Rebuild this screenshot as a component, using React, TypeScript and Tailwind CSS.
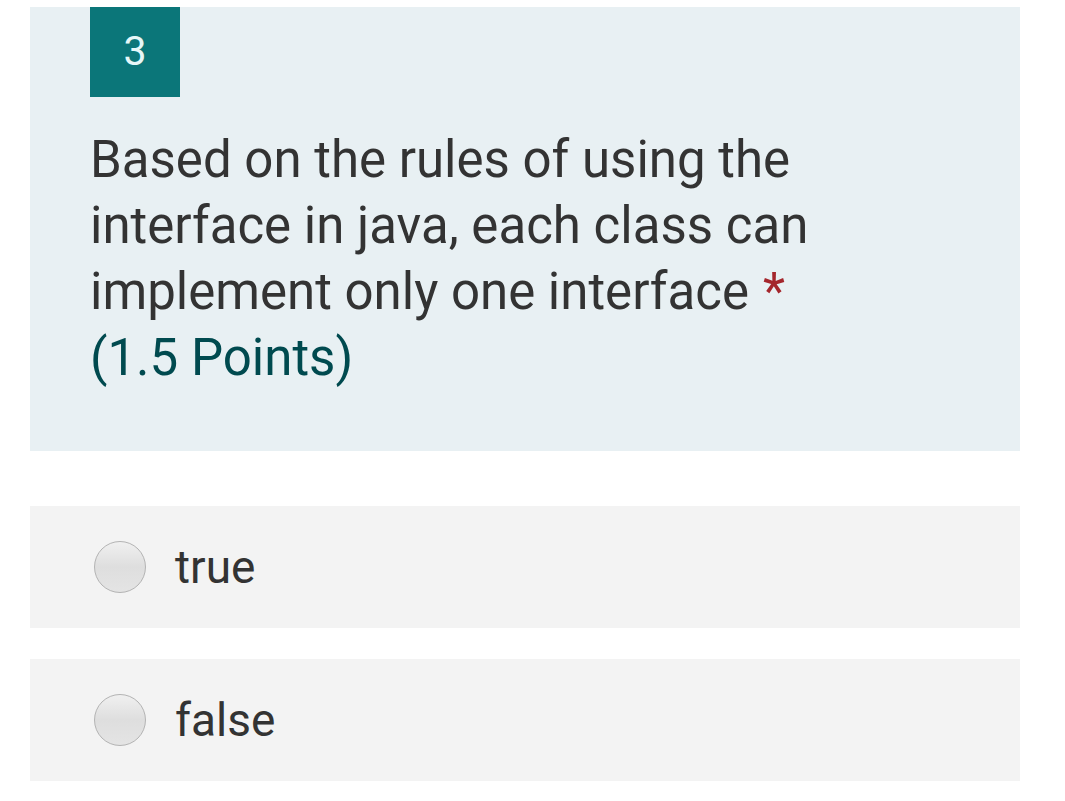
import React from 'react';

const options = ['true', 'false'];

const App = () => {
    return (
        <div className="w-[1065px] h-[801px] bg-white pt-[7px] pl-[30px] overflow-hidden" style={{ fontFamily: 'Roboto, "Noto Sans", sans-serif' }}>
            <div className="w-[990px] bg-[#e8f0f3] pl-[60px] pr-[60px] pb-[60px]">
                <div className="w-[90px] h-[90px] bg-[#0b7679] text-[#e6f7f8] text-[41px] flex items-center justify-center">
                    3
                </div>
                <div className="mt-[30px] text-[51px] leading-[66px] text-[#333333]">
                    Based on the rules of using the interface in java, each class can implement only one interface
                    <span className="ml-[14px] text-[#a4262c]">*</span>
                    <div className="text-[#004a4f]">(1.5 Points)</div>
                </div>
            </div>

            <div className="mt-[55px] w-[990px] flex flex-col gap-[31px]">
                {options.map((opt) => (
                    <div key={opt} className="h-[122px] bg-[#f3f3f3] flex items-center pl-[64px]">
                        <div className="w-[52px] h-[52px] rounded-full border border-[#b3b3b3] bg-gradient-to-b from-[#f0f0f0] via-[#dedede] to-[#e4e4e4]" />
                        <span className="ml-[29px] text-[46px] text-[#333333] leading-none">{opt}</span>
                    </div>
                ))}
            </div>
        </div>
    );
};

export default App;
